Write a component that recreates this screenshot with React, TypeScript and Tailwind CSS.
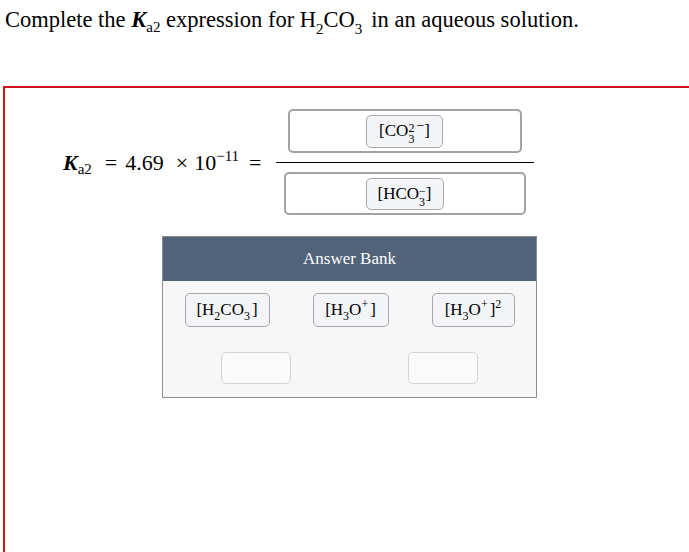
import React from "react";

const Sub = ({ children, size = "text-[12px]", top = "top-[5px]" }: { children: React.ReactNode; size?: string; top?: string }) => (
  <span className={`relative leading-none ${size} ${top}`}>{children}</span>
);

const Sup = ({ children }: { children: React.ReactNode }) => (
  <span className="relative top-[-7px] text-[12px] leading-none">{children}</span>
);

// superscript stacked over subscript, like CO₃²⁻
const Stack = ({ sup, sub }: { sup: React.ReactNode; sub: React.ReactNode }) => (
  <span className="relative top-[2px] inline-flex flex-col items-start align-middle text-[12px] leading-[11px]">
    <span>{sup}</span>
    <span>{sub}</span>
  </span>
);

const Chip = ({ children, w }: { children: React.ReactNode; w: string }) => (
  <div
    className={`flex items-center justify-center rounded-[5px] border border-[#a8a8a8] bg-[#f2f4f8] text-[17px] text-black ${w}`}
  >
    <span className="whitespace-nowrap">{children}</span>
  </div>
);

const Slot = () => (
  <div className="h-[32px] w-[70px] rounded-[5px] border border-[#d4d4d4] bg-[#fafafa]" />
);

export default function App() {
  return (
    <div className="h-[552px] w-[689px] overflow-hidden bg-white font-[family-name:'Liberation_Serif',serif] text-black">
      {/* question */}
      <div className="pl-[5px] pt-[7px] text-[22.5px] leading-[26px] whitespace-nowrap">
        Complete the <span className="font-bold italic">K</span>
        <Sub size="text-[15px]">a2</Sub> expression for H
        <Sub size="text-[15px]" top="top-[7px]">2</Sub>
        CO
        <Sub size="text-[15px]" top="top-[7px]">3</Sub>
        <span className="ml-[9px]">in an aqueous solution.</span>
      </div>

      {/* answer area */}
      <div className="mt-[53px] ml-[3px] h-[480px] border-t-2 border-l-2 border-[#d0121b]">
        <div className="flex items-center pt-[21px] pl-[58px]">
          <div className="flex items-baseline whitespace-nowrap text-[22px]">
            <span className="font-bold italic">K</span>
            <span className="relative top-[4px] text-[15px]">a2</span>
            <span className="ml-[13px]">=</span>
            <span className="ml-[8px]">4.69</span>
            <span className="ml-[12px]">×</span>
            <span className="ml-[6px]">10</span>
            <span className="relative top-[-9px] text-[15px]">−11</span>
            <span className="ml-[10px]">=</span>
          </div>

          <div className="ml-[14px] flex w-[258px] flex-col items-center">
            <div className="flex h-[44px] w-[234px] items-center justify-center rounded-[5px] border-2 border-[#a3a3a3]">
              <Chip w="h-[33px] w-[77px]">
                [CO
                <Stack sup="2" sub="3" />
                <span className="relative top-[-6px] ml-[2px] text-[14px] leading-none">−</span>]
              </Chip>
            </div>
            <div className="my-[9px] h-[1px] w-[258px] bg-black" />
            <div className="flex h-[43px] w-[242px] items-center justify-center rounded-[5px] border-2 border-[#a3a3a3]">
              <Chip w="h-[32px] w-[78px]">
                [HCO
                <Stack sup="−" sub="3" />]
              </Chip>
            </div>
          </div>
        </div>

        {/* answer bank */}
        <div className="mt-[21px] ml-[157px] w-[375px] border border-[#8c8c8c] bg-[#f7f7f7]">
          <div className="flex h-[44px] items-center justify-center bg-[#50637b] text-[17px] text-white">
            Answer Bank
          </div>
          <div className="flex justify-around pt-[12px]">
            <Chip w="h-[34px] w-[85px]">
              [H<Sub>2</Sub>CO<Sub>3</Sub>
              <span className="ml-[2px]">]</span>
            </Chip>
            <Chip w="h-[34px] w-[76px]">
              [H<Sub>3</Sub>O<Sup>+</Sup>
              <span className="ml-[2px]">]</span>
            </Chip>
            <Chip w="h-[34px] w-[83px]">
              [H<Sub>3</Sub>O<Sup>+</Sup>
              <span className="ml-[2px]">]</span>
              <Sup>2</Sup>
            </Chip>
          </div>
          <div className="flex justify-around pt-[25px] pb-[13px]">
            <Slot />
            <Slot />
          </div>
        </div>
      </div>
    </div>
  );
}
